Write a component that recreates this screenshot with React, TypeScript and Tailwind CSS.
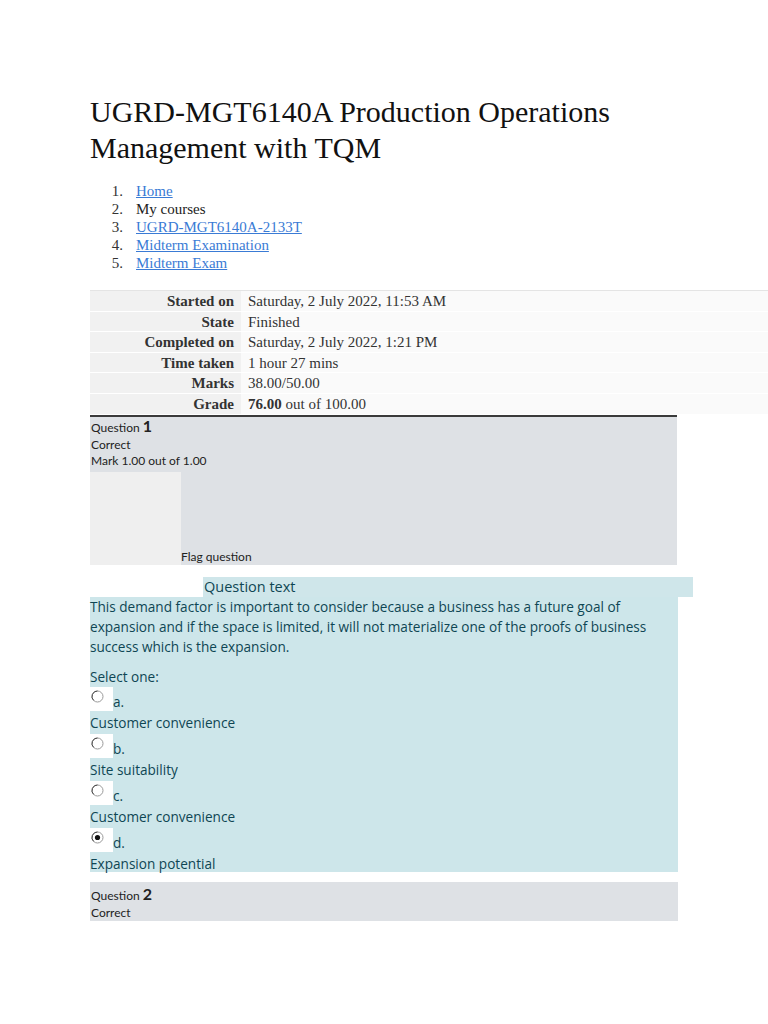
const serif = { fontFamily: '"Liberation Serif", "Times New Roman", serif' };
const sans = { fontFamily: '"Open Sans", "Noto Sans", sans-serif' };
const small = { fontFamily: 'Lato, "Open Sans", sans-serif' };

const crumbs: { text: string; link: boolean }[] = [
  { text: 'Home', link: true },
  { text: 'My courses', link: false },
  { text: 'UGRD-MGT6140A-2133T', link: true },
  { text: 'Midterm Examination', link: true },
  { text: 'Midterm Exam', link: true },
];

const summary: { label: string; value: React.ReactNode }[] = [
  { label: 'Started on', value: 'Saturday, 2 July 2022, 11:53 AM' },
  { label: 'State', value: 'Finished' },
  { label: 'Completed on', value: 'Saturday, 2 July 2022, 1:21 PM' },
  { label: 'Time taken', value: '1 hour 27 mins' },
  { label: 'Marks', value: '38.00/50.00' },
  {
    label: 'Grade',
    value: (
      <>
        <b>76.00</b> out of 100.00
      </>
    ),
  },
];

const options = [
  { key: 'a.', text: 'Customer convenience', checked: false },
  { key: 'b.', text: 'Site suitability', checked: false },
  { key: 'c.', text: 'Customer convenience', checked: false },
  { key: 'd.', text: 'Expansion potential', checked: true },
];

function Radio({ checked }: { checked: boolean }) {
  return (
    <div className="flex h-[24px] w-[23px] items-start bg-white pl-[1px] pt-[3px]">
      <svg width="13" height="13" viewBox="0 0 13 13">
        <circle cx="6.5" cy="6.5" r="5.5" fill="#fff" stroke="#9a9a9a" strokeWidth="1" />
        <path d="M2.6 10.4 A5.5 5.5 0 0 1 6.5 1" fill="none" stroke="#4a4a4a" strokeWidth="1" />
        {checked ? <circle cx="6.5" cy="6.5" r="2.6" fill="#111" /> : null}
      </svg>
    </div>
  );
}

export default function App() {
  return (
    <div className="min-h-[1024px] w-[768px] overflow-hidden bg-white pl-[90px] pt-[94px]">
      <h1 className="text-[30px] leading-[36px] text-[#111]" style={serif}>
        UGRD-MGT6140A Production Operations Management with TQM
      </h1>

      {/* breadcrumb */}
      <ol className="mt-[16px] text-[15px] leading-[18px] text-[#222]" style={serif}>
        {crumbs.map((c, i) => (
          <li key={c.text} className="flex">
            <span className="w-[33px] text-right text-[#333]">{i + 1}.</span>
            <span className="ml-[13px]">
              {c.link ? <a className="text-[#3a7bd5] underline">{c.text}</a> : c.text}
            </span>
          </li>
        ))}
      </ol>

      <div className="mt-[18px] w-[720px] border-t border-[#e4e4e4] text-[15px] text-[#333]" style={serif}>
        {summary.map((row) => (
          <div key={row.label} className="flex h-[20.6px] border-b border-[#fff] leading-[20px]">
            <div className="w-[151px] bg-[#f1f1f1] pr-[7px] text-right font-bold">{row.label}</div>
            <div className="flex-1 bg-[#fafafa] pl-[7px]">{row.value}</div>
          </div>
        ))}
      </div>

      <div className="w-[587px] border-t-2 border-[#3a3a3a] bg-[#dee1e5] text-[12px] text-[#222]" style={small}>
        <div className="flex h-[148px] flex-col">
          <div className="pl-[1px] leading-[18px]">
            Question <span className="text-[16px] font-bold">1</span>
          </div>
          <div className="pl-[1px] leading-[16px]">Correct</div>
          <div className="pl-[1px] leading-[16px]">Mark 1.00 out of 1.00</div>
          <div className="flex flex-1 items-end">
            <div className="h-[93px] w-[91px] bg-[#efefef]" />
            <div className="leading-[16px]">Flag question</div>
          </div>
        </div>
      </div>

      <div style={sans} className="text-[#0f4654]">
        <div className="ml-[113px] mt-[12px] h-[20px] w-[490px] bg-[#cfe6ea] pl-[1px] text-[14.5px] leading-[20px]">
          Question text
        </div>
        <div className="w-[588px] bg-[#cde6ea] text-[13.6px]">
          <p className="leading-[20px]">
            This demand factor is important to consider because a business has a future goal of expansion and if
            the space is limited, it will not materialize one of the proofs of business success which is the
            expansion.
          </p>
          <div className="mt-[10px] leading-[20px]">Select one:</div>
          <div>
            {options.map((opt, i) => (
              <div key={opt.key}>
                <div className="flex items-end">
                  <Radio checked={opt.checked} />
                  <span className="leading-[18px]">{opt.key}</span>
                </div>
                <div className={i === options.length - 1 ? 'h-[20px] leading-[23px]' : 'h-[23px] leading-[23px]'}>
                  {opt.text}
                </div>
              </div>
            ))}
          </div>
        </div>
      </div>

      <div className="mt-[10px] h-[39px] w-[588px] bg-[#dee1e5] pl-[1px] text-[12px] text-[#222]" style={small}>
        <div className="pt-[3px] leading-[18px]">
          Question <span className="text-[16px] font-bold">2</span>
        </div>
        <div className="leading-[16px]">Correct</div>
      </div>
    </div>
  );
}
